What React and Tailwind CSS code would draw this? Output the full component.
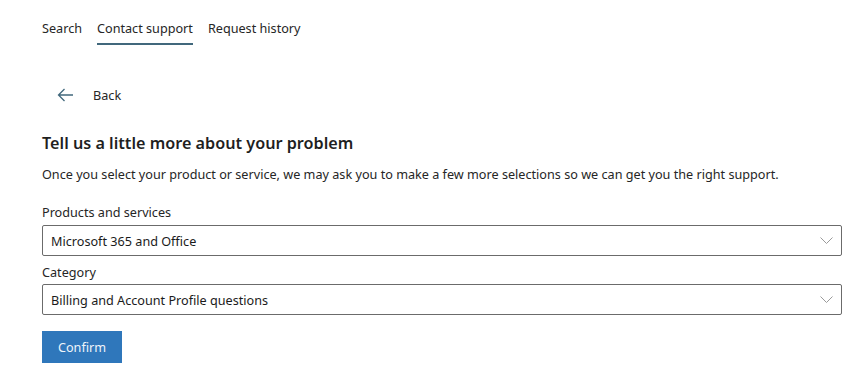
function SelectBox({ value, className = '' }) {
  return (
    <div className={`flex h-[31px] items-center justify-between rounded-[2px] border border-[#6b6b6b] bg-white pl-[8px] pr-[8px] ${className}`}>
      <span className="text-[12.65px] leading-[20px] text-[#1b1b1b]">{value}</span>
      <svg width="13" height="7" viewBox="0 0 13 7" fill="none" stroke="#9a9a9a" strokeWidth="1">
        <path d="M0.5 0.5l6 6 6-6" />
      </svg>
    </div>
  );
}

export default function App() {
  return (
    <div className="min-h-screen w-full bg-white font-['Noto_Sans','Open_Sans',sans-serif] text-[#1b1b1b]">
      <div className="pl-[42px] pr-[21px]">
        {/* tabs */}
        <nav className="flex gap-[15px] pt-[18px] text-[12.65px] leading-[20px]">
          <span className="pb-[5px] text-[#262626]">Search</span>
          <span className="border-b-2 border-[#41687c] pb-[5px] text-[#262626]">Contact support</span>
          <span className="pb-[5px] text-[#262626]">Request history</span>
        </nav>

        {/* back */}
        <button className="mt-[40px] flex h-[20px] items-center gap-[19px] pl-[15px] text-[12.65px] leading-[20px] text-[#262626]">
          <svg width="17" height="14" viewBox="0 0 17 14" fill="none" stroke="#41687c" strokeWidth="1.3">
            <path d="M16 7H1.5M7.5 1L1.5 7l6 6" />
          </svg>
          <span>Back</span>
        </button>

        <h1 className="mt-[26px] text-[16.2px] font-semibold leading-[24px] text-[#1f1f1f]">
          Tell us a little more about your problem
        </h1>
        <p className="mt-[9px] text-[12.65px] leading-[20px] text-[#262626]">
          Once you select your product or service, we may ask you to make a few more selections so we can get you the right support.
        </p>

        <label className="mt-[18px] block text-[12.65px] leading-[20px] text-[#262626]">Products and services</label>
        <SelectBox value="Microsoft 365 and Office" className="mt-[3px]" />

        <label className="mt-[6px] block text-[12.65px] leading-[20px] text-[#262626]">Category</label>
        <SelectBox value="Billing and Account Profile questions" className="mt-[2px]" />

        <button className="mt-[16px] block h-[32px] w-[80px] bg-[#2f77bb] text-[12.65px] text-[#eef4fa]">Confirm</button>
      </div>
    </div>
  );
}
